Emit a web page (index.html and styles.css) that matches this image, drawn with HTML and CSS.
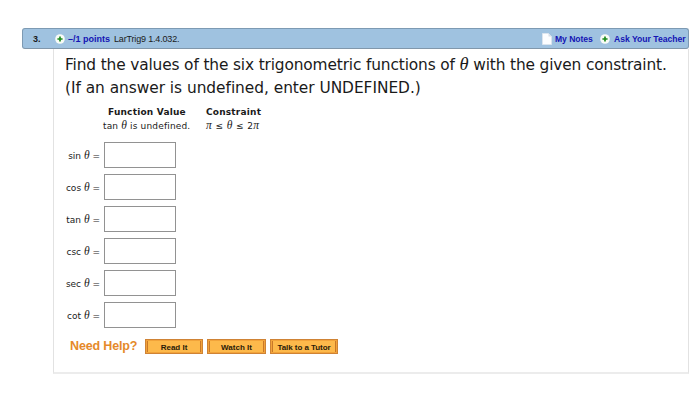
FILE: index.html
```
<!DOCTYPE html>
<html lang="en">
<head>
<meta charset="utf-8">
<title>Trigonometric functions</title>
<link rel="stylesheet" href="styles.css">
</head>
<body>
<article class="question">
  <header class="bar">
    <span class="number">3.</span>
    <svg class="plus" viewBox="0 0 10 10"><circle cx="5" cy="5" r="4.8"/><path d="M5 2.4v5.2M2.4 5h5.2"/></svg>
    <b class="points">–/1 points</b>
    <span class="source">LarTrig9 1.4.032.</span>
    <svg class="note" viewBox="0 0 10 12"><path class="sheet" d="M.5.5h6l3 3v8h-9z"/><path class="fold" d="M6.5.5v3h3z"/></svg>
    <b class="notes">My Notes</b>
    <svg class="plus ask-icon" viewBox="0 0 10 10"><circle cx="5" cy="5" r="4.8"/><path d="M5 2.4v5.2M2.4 5h5.2"/></svg>
    <b class="ask">Ask Your Teacher</b>
  </header>
  <main class="panel">
    <p class="prompt"><span class="line1">Find the values of the six trigonometric functions of <i>θ</i> with the given constraint.</span><br><span class="line2">(If an answer is undefined, enter UNDEFINED.)</span></p>
    <div class="given">
      <b class="head1">Function Value</b><b class="head2">Constraint</b>
      <span class="val1">tan <i>θ</i> is undefined.</span><span class="val2"><i>π</i> ≤ <i>θ</i> ≤ 2<i>π</i></span>
    </div>
    <div class="answers">
      <label><span>sin <i>θ</i> =</span><input type="text"></label>
      <label><span>cos <i>θ</i> =</span><input type="text"></label>
      <label><span>tan <i>θ</i> =</span><input type="text"></label>
      <label><span>csc <i>θ</i> =</span><input type="text"></label>
      <label><span>sec <i>θ</i> =</span><input type="text"></label>
      <label><span>cot <i>θ</i> =</span><input type="text"></label>
    </div>
    <div class="help">
      <b class="need">Need Help?</b>
      <button class="read"><span>Read It</span></button>
      <button class="watch"><span>Watch It</span></button>
      <button class="talk"><span>Talk to a Tutor</span></button>
    </div>
  </main>
</article>
</body>
</html>
```

FILE: styles.css
```
* { box-sizing: border-box; }
body { margin: 0; background: #fff; color: #1a1a1a; font-family: "DejaVu Sans", Verdana, sans-serif; }
i { font-family: "Liberation Serif", "Times New Roman", serif; font-size: 1.2em; line-height: 0; }
.question { width: 667px; margin: 28px 0 0 22px; }
.bar { display: flex; align-items: center; height: 21px; padding: 1px 2px 0 0; background: #9fc2e0; border: 1px solid #7d9ab3; border-bottom-color: #8197ab; border-radius: 3px; font: 9px/18px "Liberation Sans", Arial, sans-serif; white-space: nowrap; }
.bar b { color: #1414b4; }
.number { width: 22px; margin-left: 10px; font-weight: bold; }
.plus { width: 10px; height: 10px; fill: #f8fbf6; }
.plus path { stroke: #1d8a1d; stroke-width: 1.7; }
.points { width: 42px; margin-left: 3px; }
.source { margin-left: 4px; letter-spacing: -.17px; }
.note { width: 10px; height: 12px; margin-left: auto; }
.sheet { fill: #fcfdff; stroke: #dbe4ee; }
.fold { fill: #d5dde8; }
.notes { width: 38px; margin-left: 3px; font-size: 8.6px; letter-spacing: -.05px; }
.ask-icon { margin-left: 7px; }
.ask { width: 72px; margin-left: 4px; font-size: 8.6px; }
.panel { height: 325px; margin-left: 31px; padding: 5px 0 0 11px; border: 1px solid #e2e2e2; border-top: 0; border-bottom: 2px solid #ececec; }
.prompt { height: 46px; margin: 0; font-size: 15.4px; line-height: 23px; white-space: nowrap; }
.line1 { letter-spacing: -.15px; }
.line2 { letter-spacing: -.04px; }
.given { display: grid; grid-template-columns: 103px auto; grid-auto-rows: 14px; height: 30px; margin: 5px 0 0 38px; font-size: 9px; line-height: 14px; white-space: nowrap; }
.given i, .answers i { font-size: 11.5px; }
.head1 { padding-left: 5px; letter-spacing: .2px; }
.head2 { letter-spacing: .2px; }
.val1 { letter-spacing: .16px; }
.val2 { letter-spacing: .4px; }
.answers { display: grid; grid-auto-rows: 26px; row-gap: 6px; margin-top: 7px; }
.answers label { display: flex; align-items: center; justify-content: flex-end; width: 111px; font-size: 9px; white-space: nowrap; }
.answers label span { padding-top: 1px; }
.answers input { width: 72px; height: 26px; margin: 0 0 0 4px; padding: 0 4px; border: 1px solid #929292; border-radius: 0; background: #fff; }
.help { display: flex; align-items: center; height: 15px; margin: 11px 0 0 5px; }
.need { width: 75px; color: #e5892a; font: bold 12.5px/15px "Liberation Sans", Arial, sans-serif; letter-spacing: -.15px; white-space: nowrap; }
.help button { height: 15px; margin: 0 4px 0 0; padding: 1px; border: 1px solid #cf8335; border-radius: 0; background: #f2a33a; color: #2b1b08; font: bold 8px/13px "Liberation Sans", Arial, sans-serif; white-space: nowrap; }
.help button span { display: block; height: 11px; border: solid #c97828; border-width: 0 1px; background: #fdb94b; }
.read { width: 58px; }
.watch { width: 59px; }
.talk { width: 68px; letter-spacing: -.05px; }
```
